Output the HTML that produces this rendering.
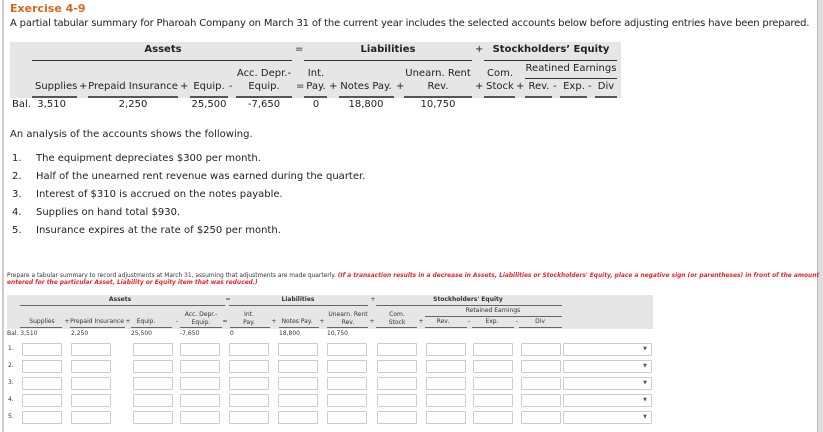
<!DOCTYPE html>
<html><head><meta charset="utf-8"><style>
*{margin:0;padding:0;box-sizing:border-box}
body{width:823px;height:432px;background:#fff;position:relative;overflow:hidden;font-family:"DejaVu Sans","Liberation Sans",sans-serif;font-size:10px;color:#222}
.a{position:absolute;white-space:nowrap;line-height:13px}
.c{transform:translateX(-50%)}
.ln{position:absolute;height:1px;background:#333}
.ln2{position:absolute;height:2px;background:#555}
.s{font-size:6px;line-height:8px;color:#333}
.in{position:absolute;height:13px;width:40px;border:1px solid #ccc;background:#fff;border-radius:1px}
</style></head><body>
<div style="position:absolute;left:2px;top:0;width:2px;height:432px;background:#ccc"></div>
<div style="position:absolute;left:817px;top:0;width:6px;height:432px;background:#ddd;border-left:1px solid #bbb"></div>

<div class="a" style="left:10px;top:2px;color:#d2691e;font-weight:bold;font-size:11px">Exercise 4-9</div>
<div class="a" style="left:10px;top:17px;font-size:10px;letter-spacing:-0.17px">A partial tabular summary for Pharoah Company on March 31 of the current year includes the selected accounts below before adjusting entries have been prepared.</div>

<div style="position:absolute;left:10px;top:42px;width:611px;height:56px;background:#e6e6e6"></div>
<div class="a c" style="left:163px;top:43px;font-weight:bold">Assets</div>
<div class="ln" style="left:32px;top:60px;width:260px"></div>
<div class="a" style="left:295px;top:43px">=</div>
<div class="a c" style="left:388px;top:43px;font-weight:bold">Liabilities</div>
<div class="ln" style="left:304px;top:60px;width:168px"></div>
<div class="a" style="left:475px;top:43px">+</div>
<div class="a c" style="left:551px;top:43px;font-weight:bold">Stockholders’ Equity</div>
<div class="ln" style="left:484px;top:60px;width:133px"></div>
<div class="a c" style="left:571px;top:62px">Reatined Earnings</div>
<div class="ln" style="left:525px;top:78px;width:92px"></div>

<div class="a" style="left:35px;top:80px">Supplies</div>
<div class="a" style="left:79px;top:80px">+</div>
<div class="a c" style="left:133px;top:80px">Prepaid Insurance</div>
<div class="a" style="left:180px;top:80px">+</div>
<div class="a c" style="left:209px;top:80px">Equip.</div>
<div class="a" style="left:229px;top:80px">-</div>
<div class="a c" style="left:264px;top:67px;text-align:center">Acc. Depr.-<br>Equip.</div>
<div class="a" style="left:296px;top:80px">=</div>
<div class="a c" style="left:316px;top:67px;text-align:center">Int.<br>Pay.</div>
<div class="a" style="left:329px;top:80px">+</div>
<div class="a c" style="left:366px;top:80px">Notes Pay.</div>
<div class="a" style="left:396px;top:80px">+</div>
<div class="a c" style="left:438px;top:67px;text-align:center">Unearn. Rent<br>Rev.</div>
<div class="a" style="left:475px;top:80px">+</div>
<div class="a c" style="left:500px;top:67px;text-align:center">Com.<br>Stock</div>
<div class="a" style="left:516px;top:80px">+</div>
<div class="a c" style="left:539px;top:80px">Rev.</div>
<div class="a" style="left:553px;top:80px">-</div>
<div class="a c" style="left:574px;top:80px">Exp.</div>
<div class="a" style="left:588px;top:80px">-</div>
<div class="a c" style="left:606px;top:80px">Div</div>
<div class="ln2" style="left:32px;top:96px;width:45px"></div>
<div class="ln2" style="left:88px;top:96px;width:90px"></div>
<div class="ln2" style="left:190px;top:96px;width:38px"></div>
<div class="ln2" style="left:236px;top:96px;width:56px"></div>
<div class="ln2" style="left:304px;top:96px;width:23px"></div>
<div class="ln2" style="left:339px;top:96px;width:55px"></div>
<div class="ln2" style="left:404px;top:96px;width:68px"></div>
<div class="ln2" style="left:484px;top:96px;width:31px"></div>
<div class="ln2" style="left:525px;top:96px;width:27px"></div>
<div class="ln2" style="left:560px;top:96px;width:27px"></div>
<div class="ln2" style="left:595px;top:96px;width:22px"></div>
<div class="a" style="left:12px;top:98px">Bal.&nbsp; 3,510</div>
<div class="a c" style="left:133px;top:98px">2,250</div>
<div class="a c" style="left:209px;top:98px">25,500</div>
<div class="a c" style="left:264px;top:98px">-7,650</div>
<div class="a c" style="left:316px;top:98px">0</div>
<div class="a c" style="left:366px;top:98px">18,800</div>
<div class="a c" style="left:438px;top:98px">10,750</div>

<div class="a" style="left:10px;top:128px">An analysis of the accounts shows the following.</div>
<div class="a" style="left:12px;top:152px">1.</div><div class="a" style="left:36px;top:152px">The equipment depreciates $300 per month.</div>
<div class="a" style="left:12px;top:170px">2.</div><div class="a" style="left:36px;top:170px">Half of the unearned rent revenue was earned during the quarter.</div>
<div class="a" style="left:12px;top:188px">3.</div><div class="a" style="left:36px;top:188px">Interest of $310 is accrued on the notes payable.</div>
<div class="a" style="left:12px;top:206px">4.</div><div class="a" style="left:36px;top:206px">Supplies on hand total $930.</div>
<div class="a" style="left:12px;top:224px">5.</div><div class="a" style="left:36px;top:224px">Insurance expires at the rate of $250 per month.</div>

<div class="a s" style="left:7px;top:272px;font-size:5.9px">Prepare a tabular summary to record adjustments at March 31, assuming that adjustments are made quarterly. <b><i style="color:#e8232a">(If a transaction results in a decrease in Assets, Liabilities or Stockholders' Equity, place a negative sign (or parentheses) in front of the amount</i></b></div>
<div class="a s" style="left:7px;top:279px;font-size:5.9px"><b><i style="color:#e8232a">entered for the particular Asset, Liability or Equity item that was reduced.)</i></b></div>

<div style="position:absolute;left:7px;top:295px;width:646px;height:34px;background:#e6e6e6"></div>
<div class="a s c" style="left:120px;top:296px;font-weight:bold">Assets</div>
<div class="ln" style="left:20px;top:305px;width:205px;background:#666"></div>
<div class="a s c" style="left:228px;top:296px">=</div>
<div class="a s c" style="left:298px;top:296px;font-weight:bold">Liabilities</div>
<div class="ln" style="left:229px;top:305px;width:139px;background:#666"></div>
<div class="a s c" style="left:373px;top:296px">+</div>
<div class="a s c" style="left:468px;top:296px;font-weight:bold">Stockholders' Equity</div>
<div class="ln" style="left:376px;top:305px;width:186px;background:#666"></div>
<div class="a s c" style="left:493px;top:307px">Retained Earnings</div>
<div class="ln" style="left:425px;top:316px;width:137px;background:#666"></div>

<div class="a s c" style="left:42px;top:318px">Supplies</div>
<div class="a s c" style="left:67px;top:318px">+</div>
<div class="a s c" style="left:97px;top:318px">Prepaid Insurance</div>
<div class="a s c" style="left:128px;top:318px">+</div>
<div class="a s c" style="left:146px;top:318px">Equip.</div>
<div class="a s c" style="left:177px;top:318px">-</div>
<div class="a s c" style="left:201px;top:311px;text-align:center">Acc. Depr.-<br>Equip.</div>
<div class="a s c" style="left:225px;top:318px">=</div>
<div class="a s c" style="left:249px;top:311px;text-align:center">Int.<br>Pay.</div>
<div class="a s c" style="left:274px;top:318px">+</div>
<div class="a s c" style="left:297px;top:318px">Notes Pay.</div>
<div class="a s c" style="left:322px;top:318px">+</div>
<div class="a s c" style="left:348px;top:311px;text-align:center">Unearn. Rent<br>Rev.</div>
<div class="a s c" style="left:372px;top:318px">+</div>
<div class="a s c" style="left:397px;top:311px;text-align:center">Com.<br>Stock</div>
<div class="a s c" style="left:421px;top:318px">+</div>
<div class="a s c" style="left:443px;top:318px">Rev.</div>
<div class="a s c" style="left:469px;top:318px">-</div>
<div class="a s c" style="left:492px;top:318px">Exp.</div>
<div class="a s c" style="left:517px;top:318px">-</div>
<div class="a s c" style="left:540px;top:318px">Div</div>
<div class="ln" style="left:20px;top:327px;width:42px;background:#666"></div>
<div class="ln" style="left:70px;top:327px;width:55px;background:#666"></div>
<div class="ln" style="left:131px;top:327px;width:41px;background:#666"></div>
<div class="ln" style="left:180px;top:327px;width:42px;background:#666"></div>
<div class="ln" style="left:230px;top:327px;width:40px;background:#666"></div>
<div class="ln" style="left:279px;top:327px;width:40px;background:#666"></div>
<div class="ln" style="left:327px;top:327px;width:41px;background:#666"></div>
<div class="ln" style="left:376px;top:327px;width:41px;background:#666"></div>
<div class="ln" style="left:425px;top:327px;width:42px;background:#666"></div>
<div class="ln" style="left:472px;top:327px;width:42px;background:#666"></div>
<div class="ln" style="left:519px;top:327px;width:43px;background:#666"></div>

<div class="a s" style="left:7px;top:330px">Bal. 3,510</div>
<div class="a s" style="left:71px;top:330px">2,250</div>
<div class="a s" style="left:131px;top:330px">25,500</div>
<div class="a s" style="left:180px;top:330px">-7,650</div>
<div class="a s" style="left:230px;top:330px">0</div>
<div class="a s" style="left:279px;top:330px">18,800</div>
<div class="a s" style="left:327px;top:330px">10,750</div>

<div id="rows"></div>
<script>
var xs=[22,71,133,180,229,278,327,377,426,473,521],ys=[343,360,377,394,411],h='';
ys.forEach(function(y,i){
 h+='<div class="a s" style="left:8px;top:'+(y+2)+'px">'+(i+1)+'.</div>';
 xs.forEach(function(x){h+='<div class="in" style="left:'+x+'px;top:'+y+'px"></div>';});
 h+='<div class="in" style="left:563px;top:'+y+'px;width:89px"><span style="position:absolute;right:4px;top:2px;font-size:5px;color:#555">&#9660;</span></div>';
});
document.getElementById('rows').innerHTML=h;
</script>
</body></html>
